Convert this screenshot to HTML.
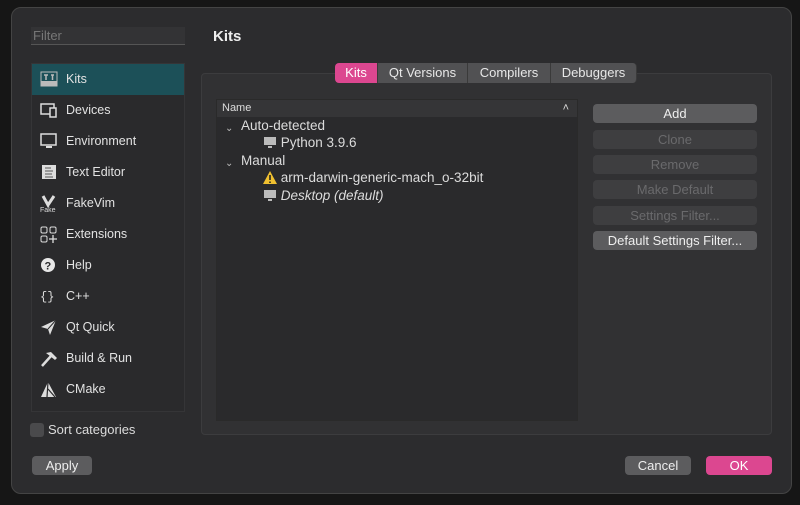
<!DOCTYPE html>
<html><head><style>
*{margin:0;padding:0;box-sizing:border-box}
body{width:800px;height:505px;background:#161616;font-family:"Liberation Sans",sans-serif;color:#dcdcdc;position:relative;overflow:hidden;font-size:13px}
.win{position:absolute;left:11px;top:7px;width:781px;height:487px;background:#2c2c2e;border:1px solid #444;border-radius:10px}
.a{position:absolute}
.filter{left:31px;top:27px;width:154px;height:18px;background:#333335;border-bottom:1px solid #555;color:#777;font-size:13px;padding:1px 2px}
.list{left:31px;top:63px;width:154px;height:349px;background:#2a2a2c;border:1px solid #353537}
.item{position:absolute;left:0;width:152px;height:31px;line-height:31px;padding-left:34px;font-size:12.5px;color:#e2e2e2}
.item svg{position:absolute;left:8px;top:7px}
.sel{background:#1c5058}
.btn{position:absolute;height:19px;border-radius:4px;background:#5c5c5e;color:#eee;font-size:13px;text-align:center;line-height:19px}
.dis{background:#3e3e40;color:#6a6a6c}
.pink{background:#dc4790;color:#fff}
.panel{left:201px;top:73px;width:571px;height:362px;background:#313133;border:1px solid #3c3c3e;border-radius:4px}
.tabs{left:335px;top:63px;height:20px;display:flex;font-size:13px;line-height:20px}
.tabs div{background:#515153;padding:0 10px;border-right:1px solid #3a3a3a;color:#e8e8e8}
.tree{left:216px;top:99px;width:362px;height:322px;background:#2a2a2c;border:1px solid #2a2a2a}
.hdr{position:absolute;left:0;top:0;width:100%;height:17px;background:#353537;font-size:11px;line-height:17px;padding-left:5px}
.row{position:absolute;font-size:13.5px;white-space:nowrap}
</style></head><body>
<div class="win"></div>
<div class="a filter">Filter</div>
<div class="a list">
 <div class="item sel" style="top:0"><svg width="18" height="16"><rect x="1" y="1" width="16" height="14" fill="none" stroke="#bbb"/><rect x="1" y="10" width="16" height="5" fill="#bbb"/><path d="M4 4h4M6 4v5M11 4h3M12.5 4v5" stroke="#bbb" stroke-width="1.5"/></svg>Kits</div>
 <div class="item" style="top:31px"><svg width="18" height="16"><rect x="1" y="2" width="13" height="10" fill="none" stroke="#ddd" stroke-width="1.5"/><rect x="10" y="6" width="6" height="9" fill="#2a2a2c" stroke="#ddd" stroke-width="1.5"/></svg>Devices</div>
 <div class="item" style="top:62px"><svg width="18" height="16"><rect x="1" y="1" width="15" height="11" fill="none" stroke="#ddd" stroke-width="1.5"/><path d="M6 14h6" stroke="#ddd" stroke-width="2"/></svg>Environment</div>
 <div class="item" style="top:93px"><svg width="18" height="16"><rect x="2" y="1" width="14" height="14" fill="#ddd"/><path d="M5 4h6M5 7h8M5 10h7M5 13h8" stroke="#555"/></svg>Text Editor</div>
 <div class="item" style="top:124px"><svg width="18" height="18"><path d="M3 1l5 9 6-9" stroke="#ddd" stroke-width="3" fill="none"/><text x="0" y="17" font-size="7" fill="#ddd" font-family="Liberation Sans">Fake</text></svg>FakeVim</div>
 <div class="item" style="top:155px"><svg width="18" height="18"><rect x="1" y="1" width="6" height="6" rx="1.5" fill="none" stroke="#ddd"/><rect x="10" y="1" width="6" height="6" rx="1.5" fill="none" stroke="#ddd"/><rect x="1" y="10" width="6" height="6" rx="1.5" fill="none" stroke="#ddd"/><path d="M13 9v8M9 13h8" stroke="#ddd" stroke-width="1.3"/></svg>Extensions</div>
 <div class="item" style="top:186px"><svg width="18" height="18"><circle cx="8" cy="8" r="7" fill="#e8e8e8"/><text x="4.5" y="12.5" font-size="11" font-weight="bold" fill="#2a2a2c" font-family="Liberation Sans">?</text></svg>Help</div>
 <div class="item" style="top:217px"><svg width="18" height="18"><text x="0" y="12" font-size="12" fill="#ddd" font-family="Liberation Mono">{}</text></svg>C++</div>
 <div class="item" style="top:248px"><svg width="18" height="18"><path d="M1 8L16 1 10 16 8 10z" fill="#ddd"/><path d="M8 10l8-9" stroke="#2a2a2c"/></svg>Qt Quick</div>
 <div class="item" style="top:279px"><svg width="18" height="18"><path d="M2 16L11 6" stroke="#ddd" stroke-width="2.5"/><path d="M6 3l5-1 6 6-2 2-5-4z" fill="#ddd"/></svg>Build &amp; Run</div>
 <div class="item" style="top:310px"><svg width="18" height="18"><path d="M8 1L1 16h15z" fill="#ddd"/><path d="M8 1l-1 15M8 8l7 8" stroke="#2a2a2c" stroke-width="1.2"/></svg>CMake</div>
</div>
<div class="a" style="left:30px;top:423px;width:14px;height:14px;border-radius:3px;background:#4a4a4c"></div>
<div class="a" style="left:48px;top:422px;font-size:13px">Sort categories</div>
<div class="btn" style="left:32px;top:456px;width:60px">Apply</div>
<div class="a" style="left:213px;top:28px;font-size:15px;font-weight:bold;color:#eee">Kits</div>
<div class="a panel"></div>
<div class="a tabs"><div style="background:#dc4790;color:#fff;border-radius:4px 0 0 4px;width:43px;text-align:center;padding:0">Kits</div><div style="width:90px;text-align:center;padding:0">Qt Versions</div><div style="width:83px;text-align:center;padding:0">Compilers</div><div style="width:86px;text-align:center;padding:0;border-radius:0 4px 4px 0">Debuggers</div></div>
<div class="a tree">
 <div class="hdr">Name<span style="position:absolute;right:8px;top:0">&#708;</span></div>
 <div class="row" style="left:8px;top:19px"><span style="font-size:10px;color:#bbb">&#8964;</span></div>
 <div class="row" style="left:24px;top:18px">Auto-detected</div>
 <div class="row" style="left:46px;top:35px"><svg width="14" height="13" style="vertical-align:-2px"><rect x="1" y="1" width="12" height="8" fill="#bbb"/><path d="M5 11h4" stroke="#bbb" stroke-width="2"/></svg> Python 3.9.6</div>
 <div class="row" style="left:8px;top:54px"><span style="font-size:10px;color:#bbb">&#8964;</span></div>
 <div class="row" style="left:24px;top:53px">Manual</div>
 <div class="row" style="left:46px;top:70px"><svg width="14" height="13" style="vertical-align:-2px"><path d="M7 0L14 13H0z" fill="#f0c030"/><path d="M7 4v5M7 10.5v1.5" stroke="#222" stroke-width="1.6"/></svg> arm-darwin-generic-mach_o-32bit</div>
 <div class="row" style="left:46px;top:88px;font-style:italic"><svg width="14" height="13" style="vertical-align:-2px"><rect x="1" y="1" width="12" height="8" fill="#bbb"/><path d="M5 11h4" stroke="#bbb" stroke-width="2"/></svg> Desktop (default)</div>
</div>
<div class="btn" style="left:593px;top:104px;width:164px">Add</div>
<div class="btn dis" style="left:593px;top:130px;width:164px">Clone</div>
<div class="btn dis" style="left:593px;top:155px;width:164px">Remove</div>
<div class="btn dis" style="left:593px;top:180px;width:164px">Make Default</div>
<div class="btn dis" style="left:593px;top:206px;width:164px">Settings Filter...</div>
<div class="btn" style="left:593px;top:231px;width:164px">Default Settings Filter...</div>
<div class="btn" style="left:625px;top:456px;width:66px">Cancel</div>
<div class="btn pink" style="left:706px;top:456px;width:66px">OK</div>
</body></html>
